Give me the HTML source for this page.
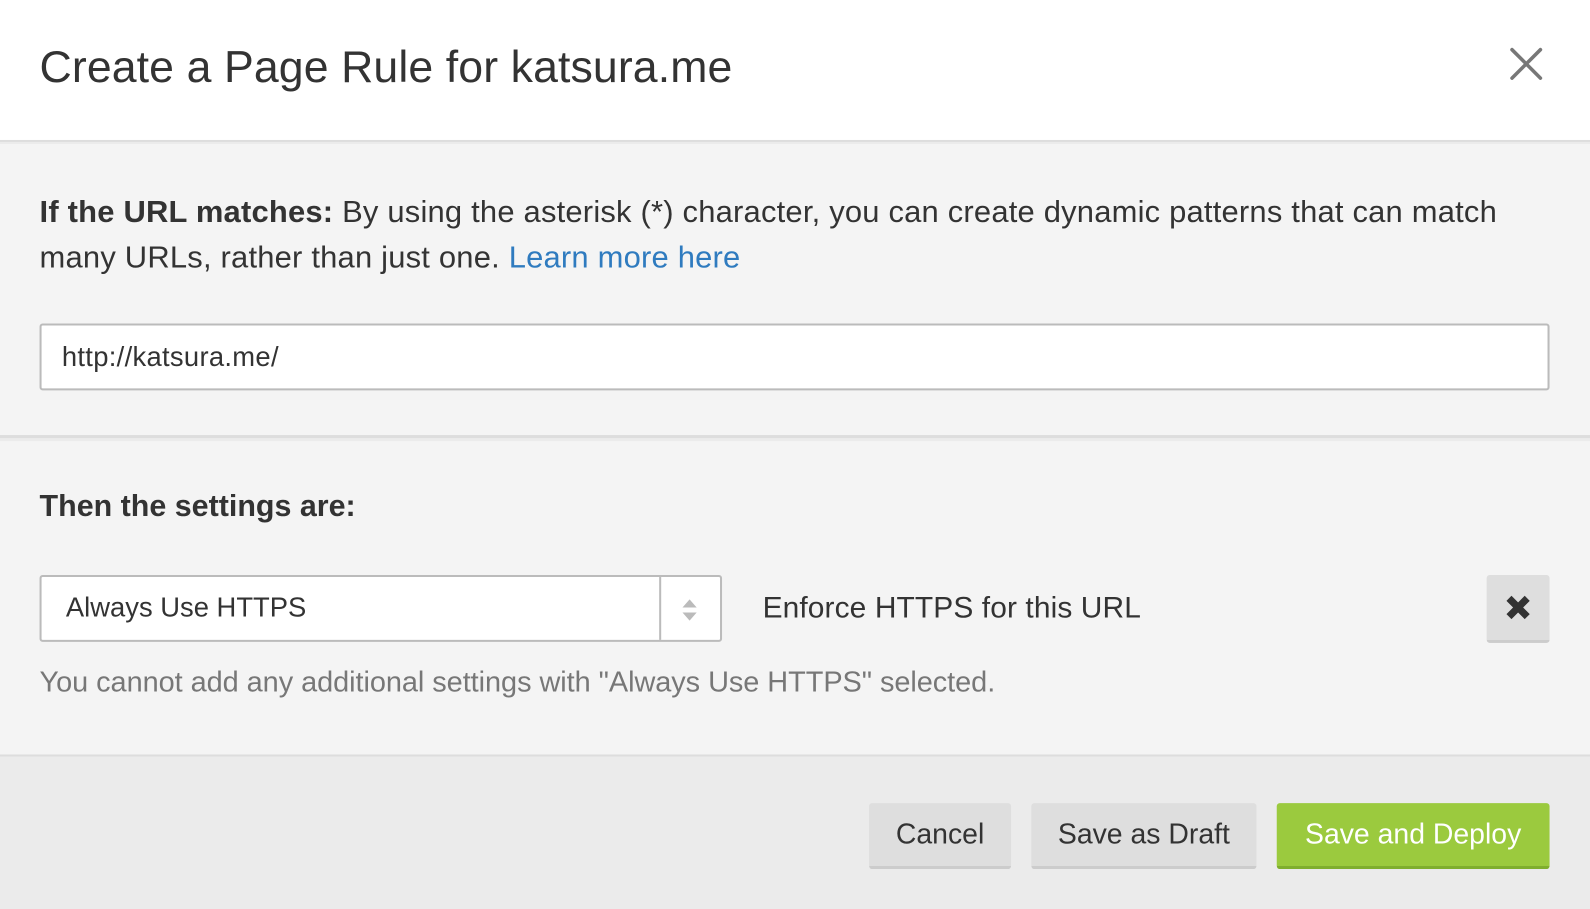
<!DOCTYPE html>
<html><head><meta charset="utf-8"><style>
*{box-sizing:border-box;margin:0;padding:0}
body{width:1590px;height:908px;overflow:hidden;font-family:"Liberation Sans",sans-serif;color:#333;background:#ebebeb;position:relative}
#w{position:absolute;left:0;top:0;width:1568px;height:896px;transform:scale(1.0141);transform-origin:0 0}
.hdr{position:absolute;left:0;top:0;width:1590px;height:140px;background:#fff;border-bottom:2px solid #ddd}
.hdr h1{position:absolute;left:39px;top:42px;font-size:44px;font-weight:normal;color:#333;letter-spacing:0.1px}
.close{position:absolute;left:1488px;top:46px}
.s1{position:absolute;left:0;top:142px;width:1590px;height:290px;background:#f4f4f4;border-bottom:3px solid #ddd}
.s2{position:absolute;left:0;top:435px;width:1590px;height:311px;background:#f4f4f4;border-bottom:2px solid #ddd}
.p{position:absolute;left:39px;top:45px;width:1500px;font-size:30.5px;line-height:45px;color:#333;letter-spacing:0.2px}
.p b{font-weight:bold}
.p a{color:#2f7bbf;text-decoration:none}
.inp{position:absolute;left:39px;top:177px;width:1489px;height:66px;background:#fff;border:2px solid #bbb;border-radius:3px;font-size:27px;padding:16px 20px;color:#333;letter-spacing:0.3px}
.h2{position:absolute;left:39px;top:48px;font-size:30px;font-weight:bold;color:#333}
.sel{position:absolute;left:39px;top:132px;width:673px;height:66px;background:#fff;border:2px solid #bbb;border-radius:3px;font-size:27px;padding:15px 24px;color:#333}
.sel .arr{position:absolute;right:0;top:0;width:60px;height:62px;border-left:2px solid #bbb}
.enf{position:absolute;left:752px;top:148px;font-size:29.5px;color:#333;letter-spacing:0.1px}
.del{position:absolute;left:1466px;top:132px;width:62px;height:67px;background:#dedede;border-bottom:3px solid #ccc;border-radius:3px}
.note{position:absolute;left:39px;top:222px;font-size:28.5px;color:#777;letter-spacing:-0.05px}
.btn{position:absolute;top:792px;height:65px;border-radius:3px;font-size:28px;text-align:center;line-height:62px}
.gray{background:#dedede;border-bottom:3px solid #ccc;color:#333}
.green{background:#9bca3e;border-bottom:3px solid #7fae2e;color:#fff}
</style></head><body><div id="w">
<div class="hdr"><h1>Create a Page Rule for katsura.me</h1>
<svg class="close" width="34" height="34" viewBox="0 0 34 34"><path d="M3 3L31 31M31 3L3 31" stroke="#777" stroke-width="3.5" stroke-linecap="round"/></svg></div>
<div class="s1">
<div class="p"><b>If the URL matches:</b> By using the asterisk (*) character, you can create dynamic patterns that can match many URLs, rather than just one. <a>Learn more here</a></div>
<div class="inp">http://katsura.me/</div>
</div>
<div class="s2">
<div class="h2">Then the settings are:</div>
<div class="sel">Always Use HTTPS<div class="arr"><svg width="60" height="62" viewBox="0 0 60 62"><path d="M21 30L28 22L35 30Z M21 35L28 43L35 35Z" fill="#bbb"/></svg></div></div>
<div class="enf">Enforce HTTPS for this URL</div>
<div class="del"><svg width="62" height="64" viewBox="0 0 62 64"><path d="M22 23L40 41M40 23L22 41" stroke="#333" stroke-width="7"/></svg></div>
<div class="note">You cannot add any additional settings with "Always Use HTTPS" selected.</div>
</div>
<div class="btn gray" style="left:857px;width:140px">Cancel</div>
<div class="btn gray" style="left:1017px;width:222px">Save as Draft</div>
<div class="btn green" style="left:1259px;width:269px">Save and Deploy</div>
</div></body></html>
